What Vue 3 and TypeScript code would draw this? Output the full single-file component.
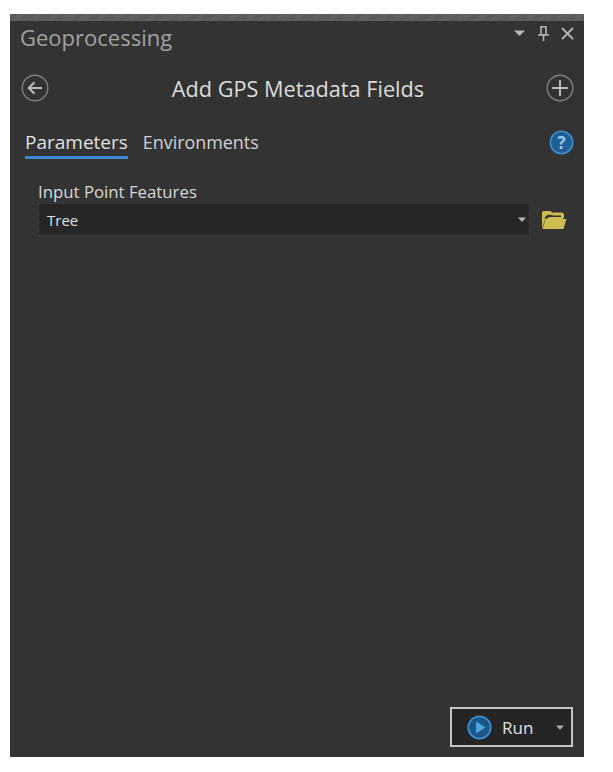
<template>
  <div class="page">
    <div class="pane">
      <div class="grip"></div>

      <div class="title-bar">
        <span class="pane-title">Geoprocessing</span>
        <div class="pane-actions">
          <svg width="12" height="8" viewBox="0 0 12 8"><path d="M0 1.5h11L5.5 7z" fill="#b8b8b8" /></svg>
          <svg width="11" height="15" viewBox="0 0 11 15">
            <path d="M3 .8h5v8H3zM0 9h11M5.5 9v6" fill="none" stroke="#b4b4b4" stroke-width="1.6" />
          </svg>
          <svg width="13" height="13" viewBox="0 0 13 13">
            <path d="M1 1l11 11M12 1L1 12" fill="none" stroke="#b4b4b4" stroke-width="1.8" />
          </svg>
        </div>
      </div>

      <div class="tool-bar">
        <svg width="28" height="28" viewBox="0 0 28 28">
          <circle cx="14" cy="14" r="12.8" fill="none" stroke="#808080" stroke-width="1.4" />
          <path d="M21 14H8M13.5 8.2L7.7 14l5.8 5.8" fill="none" stroke="#b8b8b8" stroke-width="2" />
        </svg>
        <span class="tool-title">Add GPS Metadata Fields</span>
        <svg width="28" height="28" viewBox="0 0 28 28">
          <circle cx="14" cy="14" r="12.8" fill="none" stroke="#808080" stroke-width="1.4" />
          <path d="M14 6v16M6 14h16" fill="none" stroke="#b8b8b8" stroke-width="2" />
        </svg>
      </div>

      <div class="tabs">
        <span class="tab active">Parameters</span>
        <span class="tab">Environments</span>
        <svg class="help" width="25" height="25" viewBox="0 0 25 25">
          <circle cx="12.5" cy="12.5" r="11.2" fill="#1f5f93" stroke="#3c8fd0" stroke-width="1.6" />
          <text x="12.5" y="18.5" text-anchor="middle" class="help-mark">?</text>
        </svg>
      </div>

      <div class="params">
        <label class="param-label">Input Point Features</label>
        <div class="param-row">
          <div class="combo">
            <span>Tree</span>
            <svg width="8" height="5" viewBox="0 0 8 5"><path d="M0 .5h8L4 5z" fill="#b4b4b4" /></svg>
          </div>
          <svg width="26" height="20" viewBox="0 0 26 20">
            <path d="M1 18.5V2.5L2.5 1h6.5l1.5 1.8H22V8H23V3.8H11.5C8 3 5 3.5 3.5 5.5L2.8 8H4.5L1 18.5z" fill="#cdbd50" />
            <path d="M1 2.5L2.5 1h7l1.5 1.8h11V9H3z" fill="#cdbd50" />
            <path d="M3.5 8.5C4.5 5 8 4 12 5.5H20V7H8.5L6 8.5z" fill="#333333" />
            <path d="M4.5 9H25.5L22.5 19H1.5z" fill="#cdbd50" />
          </svg>
        </div>
      </div>

      <div class="footer">
        <button class="run-button" type="button">
          <svg width="25" height="25" viewBox="0 0 25 25">
            <circle cx="12.5" cy="12.5" r="11.2" fill="#1c5684" stroke="#3c8fd0" stroke-width="1.8" />
            <path d="M9 6.5l9.5 6-9.5 6z" fill="#4ba6e8" />
          </svg>
          <span class="run-label">Run</span>
          <svg class="run-caret" width="8" height="5" viewBox="0 0 8 5"><path d="M0 .5h8L4 5z" fill="#a8a8a8" /></svg>
        </button>
      </div>
    </div>
  </div>
</template>

<script setup lang="ts">
</script>

<style>
html,
body {
  background: #fff;
}
</style>

<style scoped>
.page {
  width: 613px;
  height: 772px;
  padding: 14px 0 0 10px;
  box-sizing: border-box;
  font-family: "Open Sans", "Noto Sans", sans-serif;
}

.pane {
  width: 574px;
  height: 743px;
  display: flex;
  flex-direction: column;
  background: #333333;
}

.grip {
  height: 7px;
  background: repeating-linear-gradient(135deg, #565656 0 1px, #646464 1px 2px);
}

.title-bar {
  display: flex;
  justify-content: space-between;
  align-items: center;
  height: 30px;
  padding: 1px 10px 0;
}

.pane-title {
  font-size: 22px;
  color: #a2a2a2;
}

.pane-actions {
  display: flex;
  align-items: center;
  gap: 12px;
  margin-top: -8px;
}

.tool-bar {
  display: flex;
  justify-content: space-between;
  align-items: center;
  height: 34px;
  margin-top: 19px;
  padding: 0 10px 0 11px;
}

.tool-title {
  font-size: 21.7px;
  color: #dcdcdc;
  margin-left: 1px;
}

.tabs {
  display: flex;
  align-items: flex-start;
  gap: 15px;
  height: 34px;
  margin-top: 23px;
  padding: 0 10px 0 15px;
}

.tab {
  font-size: 17.9px;
  line-height: 28px;
  height: 28px;
  color: #d2d2d2;
}

.tab.active {
  color: #e2e2e2;
  font-size: 19px;
  font-weight: 500;
  border-bottom: 3px solid #3a88d6;
}

.help {
  margin: 2px 0 0 auto;
}

.help-mark {
  font: 700 17px "Open Sans", sans-serif;
  fill: #9cc8ec;
}

.params {
  margin-top: 19px;
  padding: 0 17px 0 28px;
}

.param-label {
  display: block;
  font-size: 16.8px;
  line-height: 22px;
  color: #d8d8d8;
}

.param-row {
  display: flex;
  align-items: center;
  gap: 11px;
}

.combo {
  flex: 1;
  display: flex;
  justify-content: space-between;
  align-items: center;
  height: 31px;
  padding: 0 3px 0 8px;
  font-size: 15px;
  font-weight: 500;
  color: #e0e0e0;
  background: #262626;
  border: 1px dotted #4a4a4a;
}

.footer {
  display: flex;
  justify-content: flex-end;
  margin-top: auto;
  padding: 0 11px 10px 0;
}

.run-button {
  display: flex;
  align-items: center;
  width: 123px;
  height: 40px;
  padding: 0;
  background: #252525;
  border: 2px solid #c4c4c4;
  font-family: inherit;
}

.run-button > svg:first-child {
  margin-left: 15px;
}

.run-label {
  margin-left: 10px;
  font-size: 17px;
  color: #e0e0e0;
}

.run-caret {
  margin-left: auto;
  margin-right: 7px;
}
</style>
